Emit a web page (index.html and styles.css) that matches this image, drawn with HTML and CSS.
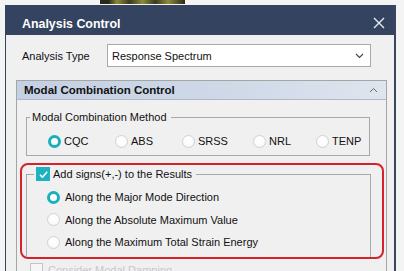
FILE: index.html
```html
<!DOCTYPE html>
<html>
<head>
<meta charset="utf-8">
<link rel="stylesheet" href="styles.css">
</head>
<body>
<div class="topstrip"><div class="deco"></div></div>
<div class="window">
  <div class="titlebar">
    <span class="title">Analysis Control</span>
    <svg class="close" width="12" height="12" viewBox="0 0 12 12"><path d="M1 1L11 11M11 1L1 11" stroke="#e8ecf2" stroke-width="1.4" fill="none"/></svg>
  </div>
  <div class="content">
    <div class="typerow">
      <span class="typelabel">Analysis Type</span>
      <div class="select">
        <span>Response Spectrum</span>
        <svg width="9" height="6" viewBox="0 0 9 6"><path d="M1 1L4.5 4.5L8 1" stroke="#444" stroke-width="1.1" fill="none"/></svg>
      </div>
    </div>
    <div class="panel">
      <div class="panelhead">
        <span>Modal Combination Control</span>
        <svg width="9" height="6" viewBox="0 0 9 6"><path d="M1 5L4.5 1.5L8 5" stroke="#666" stroke-width="1" fill="none"/></svg>
      </div>
      <fieldset class="group method">
        <legend>Modal Combination Method</legend>
        <div class="radios">
          <label class="opt"><span class="radio on"></span>CQC</label>
          <label class="opt"><span class="radio"></span>ABS</label>
          <label class="opt"><span class="radio"></span>SRSS</label>
          <label class="opt"><span class="radio"></span>NRL</label>
          <label class="opt"><span class="radio"></span>TENP</label>
        </div>
      </fieldset>
      <div class="highlight">
        <fieldset class="group signs">
          <legend><span class="check"><svg width="13" height="13" viewBox="0 0 13 13"><path d="M3 6.8L5.5 9.2L10.2 3.8" stroke="#fff" stroke-width="1.6" fill="none"/></svg></span>Add signs(+,-) to the Results</legend>
          <div class="list">
            <label class="opt"><span class="radio on"></span>Along the Major Mode Direction</label>
            <label class="opt"><span class="radio"></span>Along the Absolute Maximum Value</label>
            <label class="opt"><span class="radio"></span>Along the Maximum Total Strain Energy</label>
          </div>
        </fieldset>
      </div>
      <div class="nextrow"><span class="box"></span><span class="faded">Consider Modal Damping</span></div>
    </div>
  </div>
</div>
</body>
</html>
```
FILE: styles.css
```css
html, body {
  margin: 0;
  padding: 0;
  background: #f4f4f4;
  overflow: hidden;
  height: 271px;
}
body {
  font-family: "Liberation Sans", Arial, sans-serif;
  font-size: 11px;
  color: #111;
}
.topstrip {
  height: 5px;
  position: relative;
}
.deco {
  position: absolute;
  left: 100px;
  top: 0;
  width: 85px;
  height: 4px;
  background: linear-gradient(90deg, #2a2a1a 0, #2a2a1a 10%, #8d8a3a 20%, #3a3a22 35%, #8d8a3a 50%, #3a3a22 65%, #8d8a3a 80%, #2a2a1a 100%);
}
.window {
  margin-left: 5px;
  width: 388px;
  height: 266px;
  background: #f0f0f0;
  border-left: 1px solid #34435f;
  border-right: 2px solid #3a4560;
  overflow: hidden;
}
.titlebar {
  height: 30px;
  background: #34435f;
  display: flex;
  align-items: center;
  justify-content: space-between;
  padding: 0 9px 0 16px;
}
.title {
  color: #fff;
  font-weight: bold;
  font-size: 12.4px;
  margin-top: 7px;
}
.close {
  margin-top: 5px;
}
.content {
  padding: 9px 0 0 0;
}
.typerow {
  display: flex;
  align-items: center;
  padding-left: 16px;
  height: 23px;
}
.typelabel {
  width: 85px;
}
.select {
  border: 1px solid #a8a8a8;
  background: #fff;
  display: flex;
  align-items: center;
  justify-content: space-between;
  padding: 0 6px 0 4px;
  box-sizing: border-box;
  width: 264px;
  height: 23px;
}
.panel {
  margin: 13px 0 0 10px;
  width: 371px;
  height: 200px;
  box-sizing: border-box;
  border: 1px solid #a5a5a5;
  border-bottom: none;
}
.panelhead {
  height: 18px;
  background: linear-gradient(90deg, #c4d0e3 0%, #cfd9e8 60%, #dfe5ee 100%);
  border-bottom: 1px solid #b0b8c6;
  display: flex;
  align-items: center;
  justify-content: space-between;
  padding: 0 8px 0 7px;
  font-weight: bold;
  font-size: 11.5px;
}
.group {
  margin: 0;
  padding: 0;
  border: 1px solid #a8a8a8;
  min-width: 0;
}
.group legend {
  padding: 0 4px 0 2px;
  margin-left: 3px;
  display: flex;
  align-items: center;
  line-height: 14px;
}
.method {
  margin: 10px 16px 0 9px;
  height: 46px;
  box-sizing: border-box;
}
.radios {
  display: flex;
  padding: 10px 0 0 21px;
}
.opt {
  display: flex;
  align-items: center;
  height: 14px;
}
.radios .opt:nth-child(1) { width: 67px; }
.radios .opt:nth-child(2) { width: 67px; }
.radios .opt:nth-child(3) { width: 71px; }
.radios .opt:nth-child(4) { width: 63px; }
.radio {
  width: 13px;
  height: 13px;
  box-sizing: border-box;
  border-radius: 50%;
  border: 1px solid #d2d2d2;
  background: radial-gradient(circle at 50% 40%, #ffffff 0%, #fbfbfb 60%, #ececec 100%);
  margin-right: 3px;
  flex: none;
}
.radio.on {
  border: 3px solid #1aafbd;
  background: #fff;
}
.highlight {
  margin: 7px 2px 0 3px;
  height: 96px;
  box-sizing: border-box;
  border: 2px solid #d4232b;
  border-radius: 8px;
  padding: 2px 11px 0 4px;
  overflow: hidden;
}
.signs {
  height: 110px;
  border-bottom: none;
}
.signs legend {
  margin-left: 7px;
  padding-left: 2px;
}
.check {
  width: 14px;
  height: 14px;
  background: #1eb2c0;
  display: inline-flex;
  align-items: center;
  justify-content: center;
  margin-right: 3px;
}
.list {
  padding: 9px 0 0 20px;
  display: flex;
  flex-direction: column;
  gap: 8.5px;
}
.list .opt .radio {
  margin-right: 5px;
}
.nextrow {
  display: flex;
  align-items: center;
  padding: 4px 0 0 13px;
}
.box {
  width: 13px;
  height: 13px;
  border: 1px solid #c4c4c4;
  background: #f6f6f6;
  box-sizing: border-box;
  margin-right: 5px;
}
.faded {
  color: #c8c8c8;
}
```
